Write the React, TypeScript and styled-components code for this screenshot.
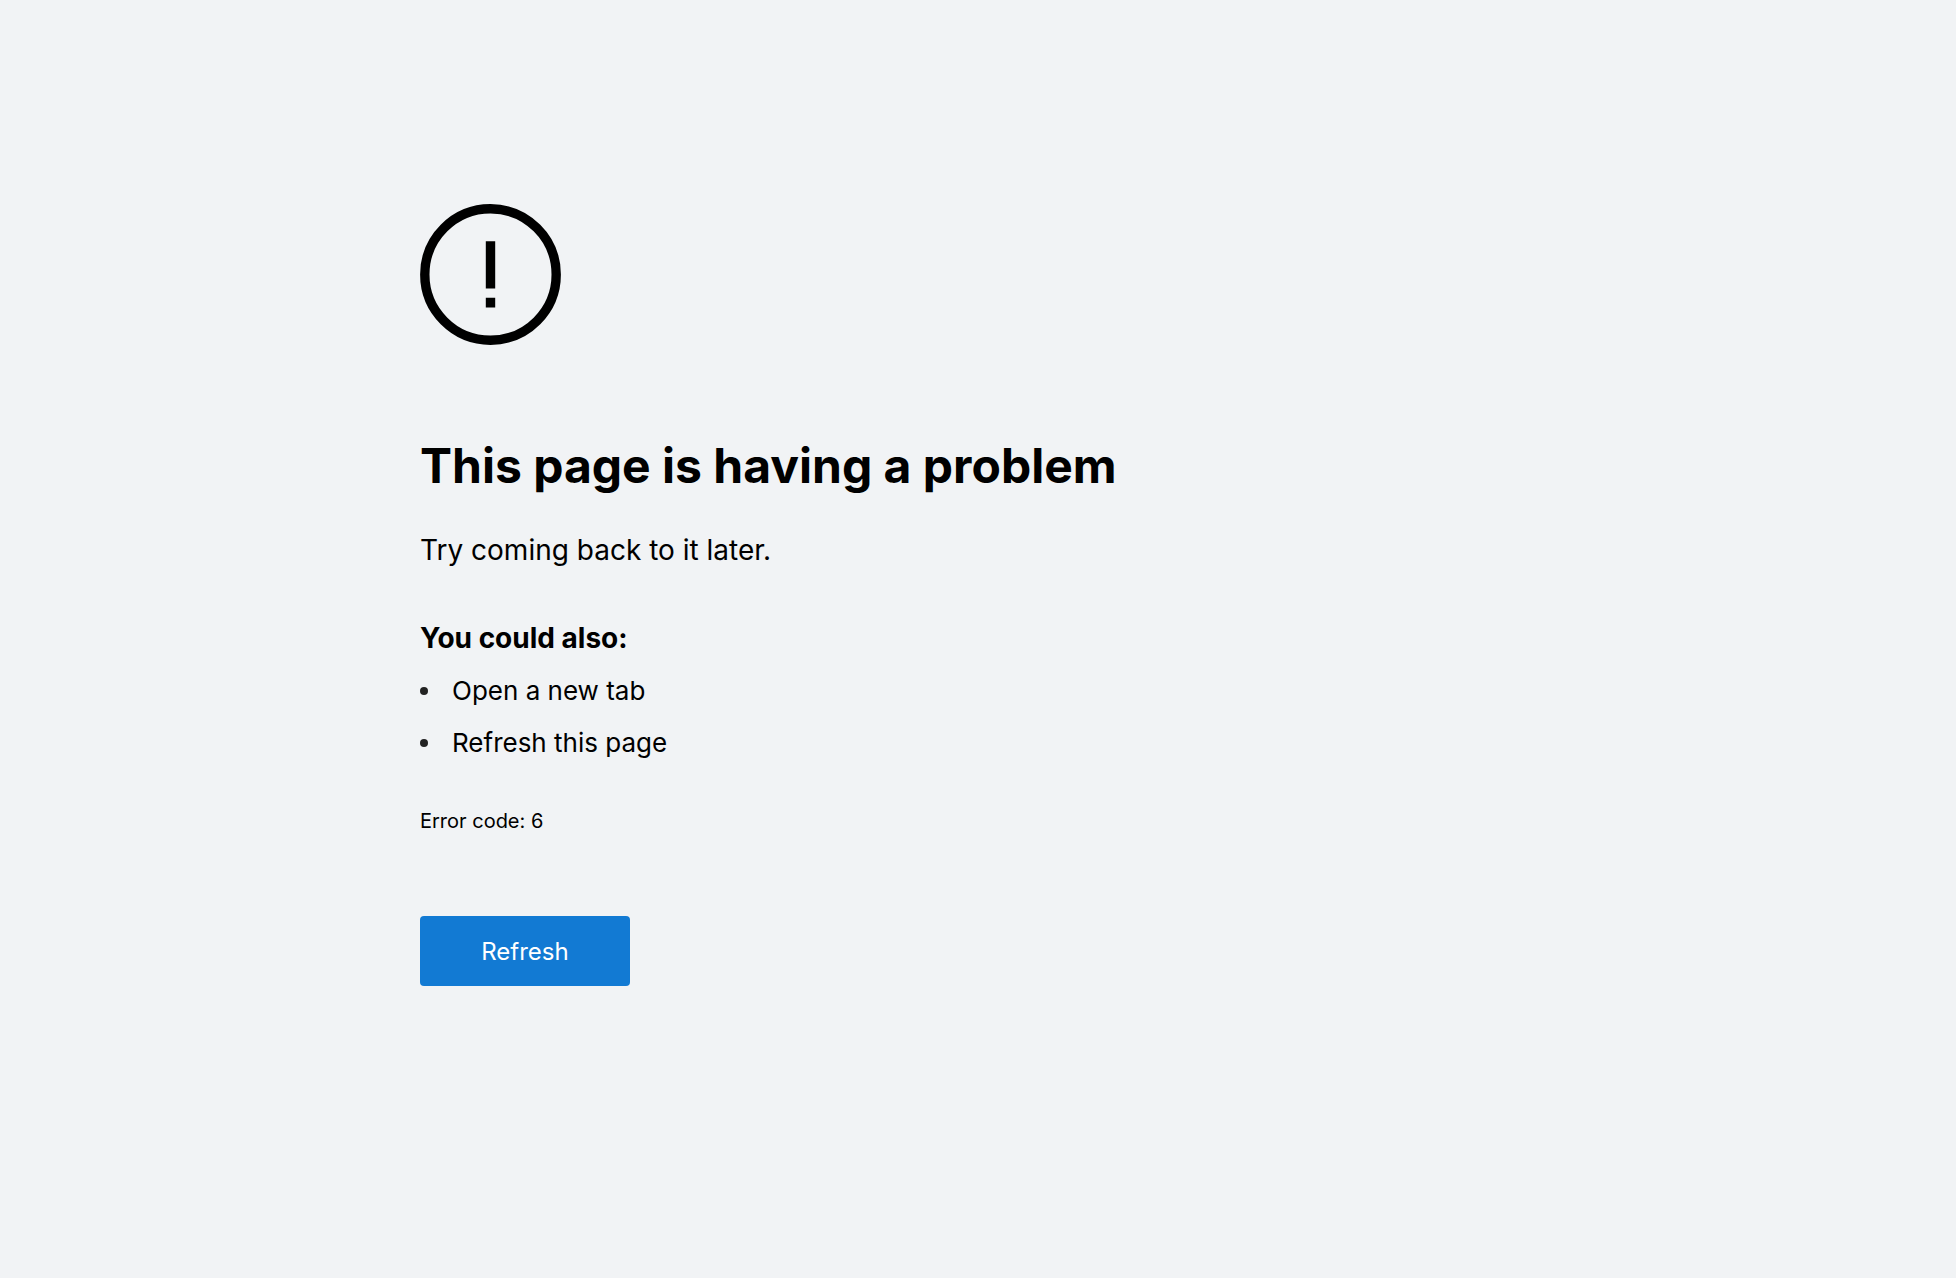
import React from "react";
import styled, { createGlobalStyle } from "styled-components";

const GlobalStyle = createGlobalStyle`
  * { box-sizing: border-box; }
  body {
    margin: 0;
    min-height: 100vh;
    background: #f1f3f5;
    color: #000;
    font-family: Inter, "Liberation Sans", sans-serif;
  }
`;

const Page = styled.main`
  width: 100%;
  max-width: 1116px;
  margin: 0 auto;
  padding: 204px 0 64px;
`;

const AlertIcon = styled.svg`
  display: block;
  width: 141px;
  height: 141px;
`;

const Title = styled.h1`
  margin: 89px 0 0;
  font-size: 48px;
  line-height: 64px;
  font-weight: 700;
`;

const Message = styled.p`
  margin: 32px 0 0;
  font-size: 28px;
  line-height: 40px;
`;

const Subtitle = styled.h2`
  margin: 48px 0 0;
  font-size: 28px;
  line-height: 40px;
  font-weight: 700;
`;

const Suggestions = styled.ul`
  display: grid;
  gap: 12px;
  margin: 13px 0 0;
  padding: 0;
  list-style: none;
`;

const Suggestion = styled.li`
  display: flex;
  align-items: center;
  gap: 24px;
  font-size: 26px;
  line-height: 40px;

  &::before {
    content: "";
    width: 8px;
    height: 8px;
    border-radius: 50%;
    background: #222;
  }
`;

const ErrorCode = styled.p`
  margin: 44px 0 0;
  font-size: 20px;
  line-height: 28px;
`;

const RefreshButton = styled.button`
  display: block;
  width: 210px;
  height: 70px;
  margin: 81px 0 0;
  padding: 0;
  border: 0;
  border-radius: 4px;
  background: #127ad3;
  color: #fff;
  font-family: inherit;
  font-size: 24px;
  cursor: pointer;
`;

export default function App() {
  return (
    <>
      <GlobalStyle />
      <Page>
        <AlertIcon viewBox="0 0 141 141" aria-hidden="true">
          <circle cx="70.5" cy="70.5" r="65.7" fill="none" stroke="#000" strokeWidth="9.4" />
          <path d="M65.8 37.2h9.4v47.4h-9.4zM65.8 93.8h9.4v9.6h-9.4z" />
        </AlertIcon>
        <Title>This page is having a problem</Title>
        <Message>Try coming back to it later.</Message>
        <Subtitle>You could also:</Subtitle>
        <Suggestions>
          <Suggestion>Open a new tab</Suggestion>
          <Suggestion>Refresh this page</Suggestion>
        </Suggestions>
        <ErrorCode>Error code: 6</ErrorCode>
        <RefreshButton type="button" onClick={() => window.location.reload()}>
          Refresh
        </RefreshButton>
      </Page>
    </>
  );
}
